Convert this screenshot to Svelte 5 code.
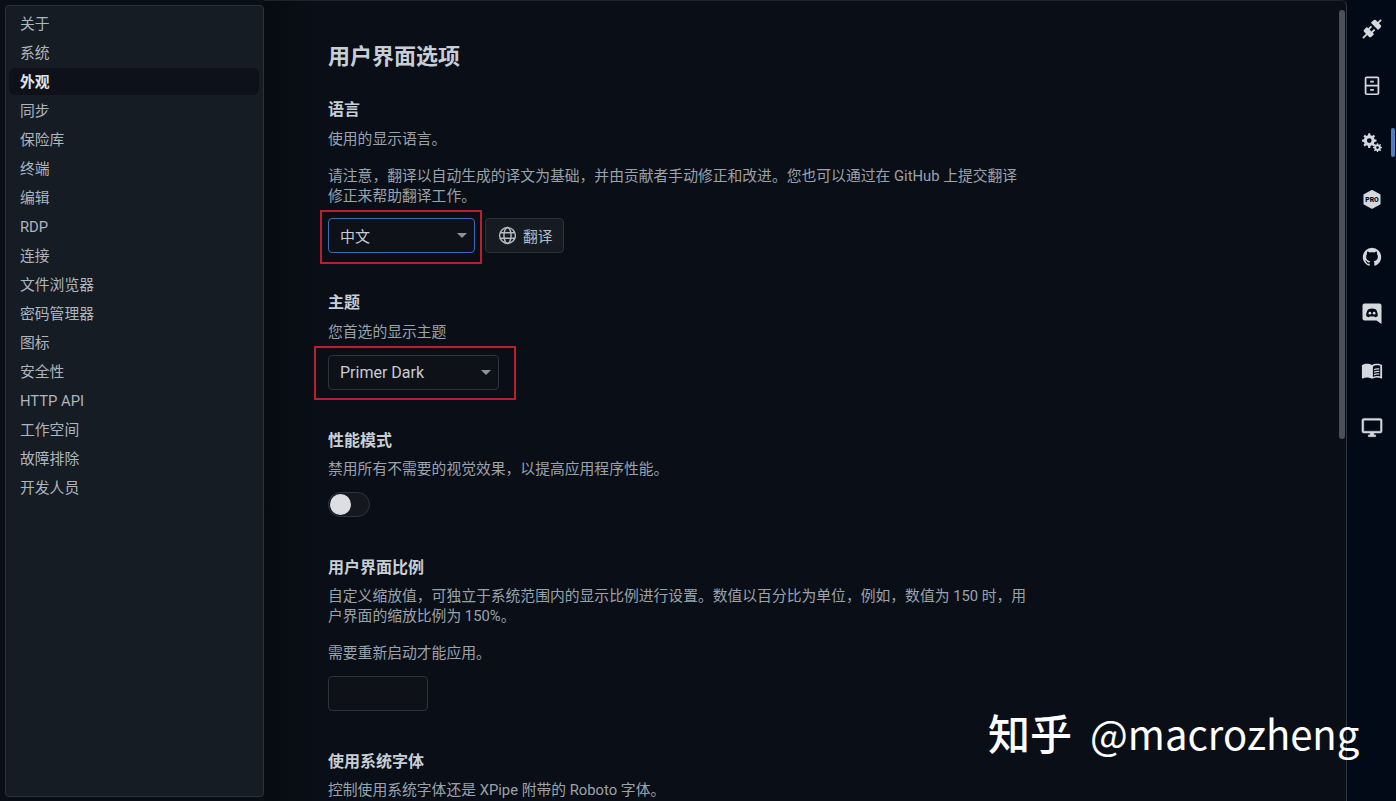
<script>
  const navItems = ['关于', '系统', '外观', '同步', '保险库', '终端', '编辑', 'RDP', '连接', '文件浏览器', '密码管理器', '图标', '安全性', 'HTTP API', '工作空间', '故障排除', '开发人员'];

  // outline of a cog wheel, with a round hole in the middle
  function gear(cx, cy, outer, inner, hole, teeth) {
    let d = '';
    const step = (Math.PI * 2) / teeth;
    for (let i = 0; i < teeth; i++) {
      const a = i * step;
      const pts = [
        [inner, a - step * 0.5],
        [inner, a - step * 0.3],
        [outer, a - step * 0.17],
        [outer, a + step * 0.17],
        [inner, a + step * 0.3]
      ];
      for (const [r, t] of pts) {
        d += (d ? 'L' : 'M') + (cx + r * Math.cos(t)).toFixed(2) + ' ' + (cy + r * Math.sin(t)).toFixed(2);
      }
    }
    d += `Z M${cx + hole} ${cy}A${hole} ${hole} 0 1 0 ${cx - hole} ${cy}A${hole} ${hole} 0 1 0 ${cx + hole} ${cy}Z`;
    return d;
  }
</script>

<div class="app">
  <nav class="nav">
    {#each navItems as item}
      <div class="nav-item" class:active={item === '外观'}>{item}</div>
    {/each}
  </nav>

  <main class="main">
    <div class="content">
      <h1>用户界面选项</h1>

      <h2 class="first">语言</h2>
      <p>使用的显示语言。</p>
      <p class="gap">请注意，翻译以自动生成的译文为基础，并由贡献者手动修正和改进。您也可以通过在 GitHub 上提交翻译<br />修正来帮助翻译工作。</p>
      <div class="lang-row">
        <div class="select focused lang-select">
          <span>中文</span><i class="caret"></i>
          <div class="mark mark-lang"></div>
        </div>
        <button class="btn">
          <svg viewBox="0 0 24 24" width="19" height="19" fill="none" stroke="currentColor" stroke-width="1.8">
            <circle cx="12" cy="12" r="10" />
            <ellipse cx="12" cy="12" rx="4.5" ry="10" />
            <path d="M2.6 8.5h18.8M2.6 15.5h18.8" />
          </svg>
          翻译
        </button>
      </div>

      <h2 class="theme">主题</h2>
      <p>您首选的显示主题</p>
      <div class="select theme-select">
        <span class="latin">Primer Dark</span><i class="caret"></i>
        <div class="mark mark-theme"></div>
      </div>

      <h2 class="perf">性能模式</h2>
      <p class="tight">禁用所有不需要的视觉效果，以提高应用程序性能。</p>
      <div class="toggle"><div class="knob"></div></div>

      <h2 class="scale">用户界面比例</h2>
      <p class="tight">自定义缩放值，可独立于系统范围内的显示比例进行设置。数值以百分比为单位，例如，数值为 150 时，用<br />户界面的缩放比例为 150%。</p>
      <p class="gap">需要重新启动才能应用。</p>
      <div class="input"></div>

      <h2 class="font">使用系统字体</h2>
      <p class="tight">控制使用系统字体还是 XPipe 附带的 Roboto 字体。</p>
    </div>
    <div class="scrollbar"><div class="thumb"></div></div>
  </main>

  <aside class="rail">
    <div class="rail-item">
      <svg viewBox="0 0 24 24" width="22" height="22" fill="currentColor"><path d="M21.4 7.5C22.2 8.3 22.2 9.6 21.4 10.3L18.6 13.1L10.8 5.3L13.6 2.5C14.4 1.7 15.7 1.7 16.4 2.5L18.2 4.3L21.2 1.3L22.6 2.7L19.6 5.7L21.4 7.5M15.6 13.3L14.2 11.9L11.4 14.7L9.3 12.6L12.1 9.8L10.7 8.4L7.9 11.2L6.4 9.8L3.6 12.6C2.8 13.4 2.8 14.7 3.6 15.4L5.4 17.2L1.4 21.2L2.8 22.6L6.8 18.6L8.6 20.4C9.4 21.2 10.7 21.2 11.4 20.4L14.2 17.6L12.8 16.2L15.6 13.3Z" /></svg>
    </div>
    <div class="rail-item">
      <svg viewBox="0 0 24 24" width="22" height="22" fill="none" stroke="currentColor" stroke-width="1.9">
        <rect x="5" y="2.5" width="14" height="18.5" rx="1" />
        <path d="M5 11.7h14M10 7.2h4M10 16.2h4" />
      </svg>
    </div>
    <div class="rail-item">
      <svg viewBox="0 0 24 24" width="22" height="22" fill="currentColor" fill-rule="evenodd">
        <path d={gear(9, 9.4, 8, 5.9, 2.6, 8)} />
        <path d={gear(18, 17, 4.9, 3.6, 1.5, 8)} />
      </svg>
      <div class="active-bar"></div>
    </div>
    <div class="rail-item">
      <svg viewBox="0 0 24 24" width="22" height="22">
        <path d="M12 1.8L20.5 6.5V16.1L12 20.8L3.5 16.1V6.5Z" fill="currentColor" stroke="currentColor" stroke-width="1.6" stroke-linejoin="round" />
        <text x="12" y="13.9" text-anchor="middle" class="pro">PRO</text>
      </svg>
    </div>
    <div class="rail-item">
      <svg viewBox="0 0 24 24" width="22" height="22" fill="currentColor"><path d="M12,2A10,10 0 0,0 2,12C2,16.42 4.87,20.17 8.84,21.5C9.34,21.58 9.5,21.27 9.5,21C9.5,20.77 9.5,20.14 9.5,19.31C6.73,19.91 6.14,17.97 6.14,17.97C5.68,16.81 5.03,16.5 5.03,16.5C4.12,15.88 5.1,15.9 5.1,15.9C6.1,15.97 6.63,16.93 6.63,16.93C7.5,18.45 8.97,18 9.54,17.76C9.63,17.11 9.89,16.67 10.17,16.42C7.95,16.17 5.62,15.31 5.62,11.5C5.62,10.39 6,9.5 6.65,8.79C6.55,8.54 6.2,7.5 6.75,6.15C6.75,6.15 7.59,5.88 9.5,7.17C10.29,6.95 11.15,6.84 12,6.84C12.85,6.84 13.71,6.95 14.5,7.17C16.41,5.88 17.25,6.15 17.25,6.15C17.8,7.5 17.45,8.54 17.35,8.79C18,9.5 18.38,10.39 18.38,11.5C18.38,15.32 16.04,16.16 13.81,16.41C14.17,16.72 14.5,17.33 14.5,18.26C14.5,19.6 14.5,20.68 14.5,21C14.5,21.27 14.66,21.59 15.17,21.5C19.14,20.16 22,16.42 22,12A10,10 0 0,0 12,2Z" /></svg>
    </div>
    <div class="rail-item">
      <svg viewBox="0 0 24 24" width="24" height="24" fill-rule="evenodd">
        <path fill="currentColor" d="M4.5 1.5H19.5A2 2 0 0 1 21.5 3.5V22L16.6 18.5H4.5A2 2 0 0 1 2.5 16.5V3.5A2 2 0 0 1 4.5 1.5Z" />
        <path fill="#020a18" d="M8 7.5C10.6 6.3 13.4 6.3 16 7.5C17.3 9.6 17.9 11.8 17.8 14C16.8 14.8 15.8 15.2 14.9 15.3L14.2 14.2C12.7 14.6 11.3 14.6 9.8 14.2L9.1 15.3C8.2 15.2 7.2 14.8 6.2 14C6.1 11.8 6.7 9.6 8 7.5Z" />
        <circle cx="9.9" cy="11.2" r="1.35" fill="currentColor" />
        <circle cx="14.1" cy="11.2" r="1.35" fill="currentColor" />
      </svg>
    </div>
    <div class="rail-item">
      <svg viewBox="0 0 24 24" width="22" height="22" fill="currentColor"><path d="M12 20.5C10.6 19.6 8.2 19 6.5 19C4.85 19 3.15 19.3 1.75 20.05L1 20.1V5.5C1.6 5.05 2.25 4.75 3 4.5C4.11 4.15 5.33 4 6.5 4C8.45 4 10.55 4.4 12 5.5C13.45 4.4 15.55 4 17.5 4C18.67 4 19.89 4.15 21 4.5C21.75 4.75 22.4 5.05 23 5.5V20.1L22.25 20.05C20.85 19.3 19.15 19 17.5 19C15.8 19 13.35 19.6 12 20.5ZM13 7.3V18.6C14.3 17.9 15.9 17.5 17.5 17.5C18.7 17.5 20 17.65 21 18V6.3C19.9 5.95 18.7 5.8 17.5 5.8C15.8 5.8 14.2 6.3 13 7.3ZM14.2 9.8C15.8 8.9 18 8.7 19.9 9V10.4C18 10.1 15.8 10.3 14.2 11.2ZM14.2 12.6C15.8 11.7 18 11.5 19.9 11.8V13.2C18 12.9 15.8 13.1 14.2 14ZM14.2 15.4C15.8 14.5 18 14.3 19.9 14.6V16C18 15.7 15.8 15.9 14.2 16.8Z" fill-rule="evenodd" /></svg>
    </div>
    <div class="rail-item">
      <svg viewBox="0 0 24 24" width="22" height="22" fill="currentColor" stroke="currentColor" stroke-width="0.5"><path d="M21,15.5H3V3.5H21M21,1.5H3C1.89,1.5 1,2.39 1,3.5V15.5A2,2 0 0,0 3,17.5H10V19.5H8V21.5H16V19.5H14V17.5H21A2,2 0 0,0 23,15.5V3.5C23,2.39 22.1,1.5 21,1.5Z" /></svg>
    </div>
  </aside>

  <div class="watermark"><span class="wm-zh">知乎</span><span class="wm-en">@macrozheng</span></div>
</div>

<style>
  :global(body) {
    margin: 0;
    background: #0a0f17;
  }

  .app {
    position: relative;
    display: flex;
    height: 801px;
    overflow: hidden;
    background: #0a0f17;
    color: #adb5bf;
    font-family: Roboto, "Noto Sans CJK SC", sans-serif;
    font-size: 14.8px;
  }

  .nav {
    flex: none;
    box-sizing: border-box;
    width: 259px;
    height: 792px;
    margin: 5px 0 0 5px;
    padding: 4px 4px 4px 3px;
    background: #161c24;
    border: 1px solid #2b323b;
    border-radius: 4px;
  }

  .nav-item {
    height: 27px;
    margin-bottom: 2px;
    padding-left: 11px;
    line-height: 29px;
    border-radius: 6px;
    color: #adb5bf;
  }

  .nav-item.active {
    background: #0e1119;
    color: #dfe4ea;
    font-weight: 700;
  }

  .main {
    position: relative;
    flex: 1;
    min-width: 0;
    border-right: 1px solid #30363e;
    border-top: 1px solid #1e232a;
    border-top-right-radius: 6px;
    background: linear-gradient(90deg, #060b12 0, #0a0f17 50px);
  }

  .content {
    width: 712px;
    padding: 42px 0 0 64px;
  }

  h1 {
    margin: 0;
    height: 28px;
    line-height: 28px;
    font-size: 22px;
    font-weight: 700;
    color: #c7ced6;
  }

  h2 {
    margin: 0;
    height: 24px;
    line-height: 24px;
    font-size: 16px;
    font-weight: 700;
    color: #c7ced6;
  }

  p {
    margin: 7px 0 0;
    line-height: 20px;
    color: #9aa2ac;
  }

  p.tight {
    margin-top: 6px;
  }

  p.gap {
    margin-top: 17px;
  }

  h2.first { margin-top: 27px; }
  h2.theme { margin-top: 38px; }
  h2.perf { margin-top: 39px; }
  h2.scale { margin-top: 39px; }
  h2.font { margin-top: 39px; }

  .lang-row {
    display: flex;
    gap: 10px;
    margin-top: 12px;
  }

  .select {
    position: relative;
    box-sizing: border-box;
    display: flex;
    align-items: center;
    justify-content: space-between;
    height: 35px;
    padding: 0 7px 0 11px;
    background: #0e1117;
    border: 1px solid #2d333b;
    border-radius: 4px;
    color: #c5ccd4;
    font-size: 15px;
  }

  .select.focused {
    border-color: #3c6db5;
  }

  .latin {
    font-size: 16px;
  }

  .lang-select {
    width: 147px;
  }

  .theme-select {
    width: 171px;
    margin-top: 13px;
  }

  .caret {
    width: 0;
    height: 0;
    border-left: 5px solid transparent;
    border-right: 5px solid transparent;
    border-top: 5px solid #8d939b;
  }

  .mark {
    position: absolute;
    box-sizing: border-box;
    border: 2px solid #b9202c;
    pointer-events: none;
  }

  .mark-lang {
    left: -9px;
    top: -9px;
    width: 162px;
    height: 54px;
  }

  .mark-theme {
    left: -15px;
    top: -10px;
    width: 202px;
    height: 54px;
  }

  .btn {
    box-sizing: border-box;
    display: flex;
    align-items: center;
    gap: 6px;
    width: 79px;
    height: 35px;
    padding: 0 0 0 12px;
    background: #161b22;
    border: 1px solid #2b3138;
    border-radius: 4px;
    color: #b4bcc5;
    font: inherit;
  }

  .toggle {
    box-sizing: border-box;
    display: flex;
    align-items: center;
    width: 42px;
    height: 25px;
    margin-top: 13px;
    background: #15181f;
    border: 1px solid #2f353c;
    border-radius: 13px;
  }

  .knob {
    width: 21px;
    height: 21px;
    margin-left: 1px;
    border-radius: 50%;
    background: #dcdee1;
  }

  .input {
    box-sizing: border-box;
    width: 100px;
    height: 35px;
    margin-top: 13px;
    background: #0e1117;
    border: 1px solid #2d333b;
    border-radius: 4px;
  }

  .scrollbar {
    position: absolute;
    top: 9px;
    right: 1px;
    width: 6px;
    height: 790px;
  }

  .thumb {
    height: 429px;
    background: #4a5059;
    border-radius: 3px;
  }

  .rail {
    flex: none;
    width: 49px;
    background: #020a18;
    color: #d5d9de;
  }

  .rail-item {
    position: relative;
    display: flex;
    align-items: center;
    justify-content: center;
    height: 57px;
  }

  .active-bar {
    position: absolute;
    top: 14px;
    right: 1px;
    width: 4px;
    height: 29px;
    background: #4f7fc0;
    border-radius: 2px;
  }

  .pro {
    font-family: Roboto, sans-serif;
    font-size: 7.4px;
    font-weight: 900;
    fill: #020a18;
  }

  .watermark {
    position: absolute;
    left: 988px;
    top: 702px;
    display: flex;
    align-items: baseline;
    gap: 18px;
    font-family: "Noto Sans CJK SC", sans-serif;
    line-height: 60px;
    color: #fff;
    white-space: nowrap;
  }

  .wm-zh {
    font-size: 42px;
    font-weight: 500;
  }

  .wm-en {
    font-size: 40px;
  }
</style>
